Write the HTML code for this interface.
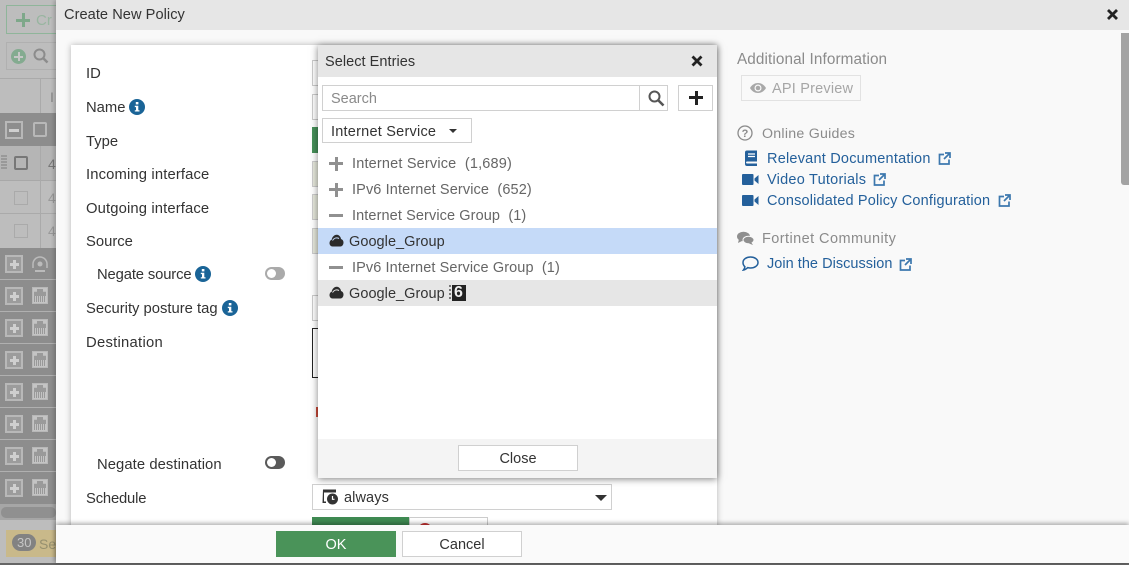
<!DOCTYPE html>
<html><head><meta charset="utf-8">
<style>
html,body{margin:0;padding:0;width:1129px;height:565px;overflow:hidden;background:#bcbcbc;font-family:"Liberation Sans",sans-serif;font-size:14px;color:#333}
div,span,svg{position:absolute;box-sizing:border-box}
.t{white-space:nowrap;line-height:18px;height:18px}
.g{left:0;width:56px;height:32px;background:#8d8d8d;border-bottom:1px solid #b0b0b0}
.pb{left:5px;width:18px;height:18px;border:2px solid #b8b8b8;background:#9c9c9c}
.pb:before{content:"";position:absolute;left:2.500px;top:5.500px;width:9px;height:3px;background:#cfcfcf}
.pb:after{content:"";position:absolute;left:5.500px;top:2.500px;width:3px;height:9px;background:#cfcfcf}
.sw{left:32px;width:16px;height:17px;background:#c4c4c4;border:1px solid #b8b8b8}
.sw:before{content:"";position:absolute;left:1px;top:1px;width:12px;height:7px;background:#9a9a9a;clip-path:polygon(0 100%,0 40%,25% 40%,25% 0,75% 0,75% 40%,100% 40%,100% 100%)}
.sw:after{content:"";position:absolute;left:1px;top:8px;width:12px;height:6px;background:repeating-linear-gradient(90deg,#999 0,#999 1px,#c4c4c4 1px,#c4c4c4 2px)}
.f{left:312px;width:10px;height:26px;background:#fff;border:1px solid #ccc}
.b{background:#fff;border:1px solid #d0d0d0}
.lbl{color:#333;left:86px;font-size:14.800px}
.link{color:#24609b}
.gray{color:#8b8b8b}
.tg{width:20px;height:13px;border-radius:7px;left:265px}
.tg:before{content:"";position:absolute;left:2px;top:2px;width:9px;height:9px;border-radius:50%;background:#fff}
</style></head><body>

<!-- backdrop left -->
<div style="left:0;top:0;width:56px;height:565px;background:#bdbdbd"></div>
<div style="left:6px;top:5px;width:60px;height:29px;border:1px solid #8fb59a"></div>
<div style="left:16px;top:19px;width:14px;height:3px;background:#7ea88a"></div>
<div style="left:21.500px;top:13px;width:3px;height:14px;background:#7ea88a"></div>
<div class="t" style="left:36px;top:12px;color:#98b5a0;font-size:15px">Cr</div>
<div style="left:6px;top:42px;width:60px;height:28px;border:1px solid #b0b0b0"></div>
<div style="left:11px;top:49px;width:15px;height:15px;border-radius:50%;background:#84ab90"></div>
<div style="left:14px;top:55.500px;width:9px;height:2px;background:#c6c6c6"></div>
<div style="left:17.500px;top:52px;width:2px;height:9px;background:#c6c6c6"></div>
<svg style="left:32px;top:47px" width="18" height="18" viewBox="0 0 18 18"><circle cx="7.500" cy="7.500" r="5" fill="none" stroke="#8c8c8c" stroke-width="2"/><path d="M11 11l4.500 4.500" stroke="#8c8c8c" stroke-width="2.500"/></svg>
<div style="left:0;top:78px;width:56px;height:1px;background:#aaa"></div>
<div style="left:40px;top:79px;width:1px;height:34px;background:#aaa"></div>
<div class="t" style="left:50px;top:88px;color:#888">I</div>
<div style="left:0;top:113px;width:56px;height:33px;background:#8d8d8d"></div>
<div style="left:5px;top:121px;width:18px;height:18px;border:2px solid #b8b8b8"></div>
<div style="left:9px;top:128.500px;width:10px;height:3px;background:#cfcfcf"></div>
<div style="left:33px;top:122px;width:14px;height:15px;border:2px solid #b8b8b8;border-radius:2px"></div>
<div style="left:0;top:146px;width:56px;height:35px;background:#b5b5b5;border-bottom:1px solid #a8a8a8"></div>
<div style="left:1px;top:155px;width:6px;height:15px;background:repeating-linear-gradient(#999 0,#999 2px,transparent 2px,transparent 3px)"></div>
<div style="left:14px;top:156px;width:14px;height:14px;border:2px solid #777;border-radius:2px"></div>
<div style="left:40px;top:146px;width:1px;height:102px;background:#aaa"></div>
<div class="t" style="left:48px;top:155px;color:#777">4</div>
<div style="left:0;top:181px;width:56px;height:33px;border-bottom:1px solid #aaa"></div>
<div style="left:14px;top:191px;width:14px;height:14px;border:1px solid #aaa"></div>
<div class="t" style="left:48px;top:189px;color:#999">4</div>
<div style="left:14px;top:224px;width:14px;height:14px;border:1px solid #aaa"></div>
<div class="t" style="left:48px;top:222px;color:#999">4</div>
<div class="g" style="top:248px"></div><div class="pb" style="top:255px"></div>
<svg style="left:31px;top:255px" width="18" height="18" viewBox="0 0 18 18"><path d="M2 13V9a7 7 0 0 1 14 0v4" fill="none" stroke="#bbb" stroke-width="1.500"/><circle cx="9" cy="9" r="2.500" fill="#bbb"/><path d="M4 16h10" stroke="#bbb" stroke-width="2"/></svg>
<div class="g" style="top:280px"></div><div class="pb" style="top:287px"></div><div class="sw" style="top:287px"></div>
<div class="g" style="top:312px"></div><div class="pb" style="top:319px"></div><div class="sw" style="top:319px"></div>
<div class="g" style="top:344px"></div><div class="pb" style="top:351px"></div><div class="sw" style="top:351px"></div>
<div class="g" style="top:376px"></div><div class="pb" style="top:383px"></div><div class="sw" style="top:383px"></div>
<div class="g" style="top:408px"></div><div class="pb" style="top:415px"></div><div class="sw" style="top:415px"></div>
<div class="g" style="top:440px"></div><div class="pb" style="top:447px"></div><div class="sw" style="top:447px"></div>
<div class="g" style="top:472px;height:32px;border:0"></div><div class="pb" style="top:479px"></div><div class="sw" style="top:479px"></div>
<div style="left:0;top:504px;width:56px;height:16px;background:#a6a6a6"></div>
<div style="left:1px;top:507px;width:55px;height:11px;background:#909090;border-radius:5px"></div>
<div style="left:6px;top:530px;width:50px;height:27px;background:#c9b98a"></div>
<div style="left:12px;top:534px;width:24px;height:17px;border-radius:9px;background:#828282"></div>
<div class="t" style="left:17px;top:534px;color:#c6c6c6;font-size:13px">30</div>
<div class="t" style="left:39px;top:535px;color:#96906f">Se</div>
<div style="left:0;top:563px;width:1129px;height:2px;background:#666"></div>

<!-- dialog -->
<div style="left:56px;top:0;width:1073px;height:563px;background:#f9f9f9;box-shadow:-2px 0 4px rgba(0,0,0,.2)"></div>
<div style="left:56px;top:0;width:1073px;height:30px;background:#e6e6e6"></div>
<div class="t" style="left:64px;top:6px;font-size:14.600px;letter-spacing:.05px">Create New Policy</div>
<svg style="left:1106px;top:8px" width="13" height="13" viewBox="0 0 13 13"><path d="M2 2l9 9M11 2l-9 9" stroke="#222" stroke-width="2.800"/></svg>
<div style="left:1121px;top:33px;width:8px;height:152px;background:#a3a3a3;border-radius:0 0 0 3px"></div>

<!-- form panel -->
<div style="left:71px;top:45px;width:646px;height:490px;background:#fff;box-shadow:0 0 6px rgba(0,0,0,.28)"></div>
<div class="t lbl" style="top:65px">ID</div>
<div class="t lbl" style="top:99px">Name</div>
<svg style="left:129px;top:99px" width="16" height="16" viewBox="0 0 16 16"><circle cx="8" cy="8" r="8" fill="#1a6497"/><rect x="6.800" y="3" width="2.600" height="2.400" fill="#fff"/><path d="M5.800 6.800h3.500v4.400h1.200v1.300h-4.700v-1.300h1.200v-3.100h-1.200z" fill="#fff"/></svg>
<div class="t lbl" style="top:133px">Type</div>
<div class="t lbl" style="top:166px;letter-spacing:.14px">Incoming interface</div>
<div class="t lbl" style="top:200px;letter-spacing:.13px">Outgoing interface</div>
<div class="t lbl" style="top:233px">Source</div>
<div class="t lbl" style="left:97px;top:266px;letter-spacing:-.14px">Negate source</div>
<svg style="left:195px;top:266px" width="16" height="16" viewBox="0 0 16 16"><circle cx="8" cy="8" r="8" fill="#1a6497"/><rect x="6.800" y="3" width="2.600" height="2.400" fill="#fff"/><path d="M5.800 6.800h3.500v4.400h1.200v1.300h-4.700v-1.300h1.200v-3.100h-1.200z" fill="#fff"/></svg>
<div class="tg" style="top:267px;background:#aaa"></div>
<div class="t lbl" style="top:300px">Security posture tag</div>
<svg style="left:222px;top:300px" width="16" height="16" viewBox="0 0 16 16"><circle cx="8" cy="8" r="8" fill="#1a6497"/><rect x="6.800" y="3" width="2.600" height="2.400" fill="#fff"/><path d="M5.800 6.800h3.500v4.400h1.200v1.300h-4.700v-1.300h1.200v-3.100h-1.200z" fill="#fff"/></svg>
<div class="t lbl" style="top:334px;letter-spacing:.27px">Destination</div>
<div class="t lbl" style="left:97px;top:456px;letter-spacing:.07px">Negate destination</div>
<div class="tg" style="top:456px;background:#5a5a5a"></div>
<div class="t lbl" style="top:490px;letter-spacing:-.18px">Schedule</div>

<!-- fields behind popup -->
<div class="f" style="top:60px"></div>
<div class="f" style="top:94px"></div>
<div style="left:312px;top:127px;width:10px;height:26px;background:#46915a"></div>
<div class="f" style="top:161px;background:#e6e8dc"></div>
<div class="f" style="top:194px;background:#e6e8dc"></div>
<div class="f" style="top:228px;background:#e6e8dc"></div>
<div class="f" style="top:295px"></div>
<div class="f" style="top:328px;height:50px;border:1px solid #222"></div>
<div style="left:316px;top:407px;width:3px;height:10px;background:#cc4a3a"></div>

<!-- schedule -->
<div class="b" style="left:312px;top:484px;width:300px;height:26px"></div>
<svg style="left:321px;top:488px" width="18" height="18" viewBox="0 0 18 18"><path d="M2 1.500h13v3h-12v9h2v1.500h-3.500z" fill="#333"/><circle cx="11.500" cy="11" r="5.500" fill="#333"/><path d="M11.500 8v3.300h2" fill="none" stroke="#fff" stroke-width="1.200"/></svg>
<div class="t" style="left:344px;top:489px;font-size:14.500px;letter-spacing:.1px">always</div>
<div style="left:595px;top:495px;border-left:6px solid transparent;border-right:6px solid transparent;border-top:6px solid #333"></div>
<div style="left:312px;top:517px;width:97px;height:12px;background:#3f8a52"></div>
<div style="left:409px;top:517px;width:79px;height:12px;background:#fff;border:1px solid #ccc"></div>
<div style="left:418px;top:523px;width:14px;height:14px;border-radius:50%;border:2px solid #c33"></div>

<!-- right column -->
<div class="t gray" style="left:737px;top:51px;font-size:15.300px;letter-spacing:.1px">Additional Information</div>
<div style="left:741px;top:75px;width:120px;height:26px;border:1px solid #e2e2e2"></div>
<svg style="left:750px;top:81px" width="16" height="14" viewBox="0 0 16 14"><path d="M0 7c2-3.500 5-5 8-5s6 1.500 8 5c-2 3.500-5 5-8 5s-6-1.500-8-5z" fill="#a8a8a8"/><circle cx="8" cy="7" r="3.500" fill="#f9f9f9"/><circle cx="8" cy="7" r="2.300" fill="#a8a8a8"/></svg>
<div class="t" style="left:772px;top:80px;color:#a6a6a6;font-size:14.500px;letter-spacing:.2px">API Preview</div>
<svg style="left:737px;top:125px" width="16" height="16" viewBox="0 0 16 16"><circle cx="8" cy="8" r="7" fill="none" stroke="#8b8b8b" stroke-width="1.300"/><text x="8" y="12" font-family="Liberation Sans" font-size="11" font-weight="bold" text-anchor="middle" fill="#8b8b8b">?</text></svg>
<div class="t gray" style="left:762px;top:125px;font-size:14.200px;letter-spacing:.25px">Online Guides</div>
<svg style="left:743px;top:150px" width="16" height="16" viewBox="0 0 16 16"><path d="M2 2.500a2 2 0 0 1 2-2h10v11H4a1 1 0 0 0 0 2h10V16H4a2 2 0 0 1-2-2z" fill="#24609b"/><path d="M5 4h7M5 6.500h7" stroke="#fff" stroke-width="1.200"/></svg>
<div class="t link" style="left:767px;top:150px;font-size:14.500px;letter-spacing:.22px">Relevant Documentation</div>
<svg style="left:938px;top:152px" width="13" height="13" viewBox="0 0 13 13"><path d="M6 2.500H1.500V12H11V7.500M7 1h5v5M12 1L6 7" fill="none" stroke="#3d78ae" stroke-width="1.700"/></svg>
<svg style="left:742px;top:174px" width="17" height="11" viewBox="0 0 17 11"><rect width="11.500" height="11" rx="1" fill="#24609b"/><path d="M12.500 4.500L16.500 1v9l-4-3.500z" fill="#24609b"/></svg>
<div class="t link" style="left:767px;top:171px;font-size:14.500px;letter-spacing:.24px">Video Tutorials</div>
<svg style="left:873px;top:173px" width="13" height="13" viewBox="0 0 13 13"><path d="M6 2.500H1.500V12H11V7.500M7 1h5v5M12 1L6 7" fill="none" stroke="#3d78ae" stroke-width="1.700"/></svg>
<svg style="left:742px;top:195px" width="17" height="11" viewBox="0 0 17 11"><rect width="11.500" height="11" rx="1" fill="#24609b"/><path d="M12.500 4.500L16.500 1v9l-4-3.500z" fill="#24609b"/></svg>
<div class="t link" style="left:767px;top:192px;font-size:14.500px;letter-spacing:.17px">Consolidated Policy Configuration</div>
<svg style="left:998px;top:194px" width="13" height="13" viewBox="0 0 13 13"><path d="M6 2.500H1.500V12H11V7.500M7 1h5v5M12 1L6 7" fill="none" stroke="#3d78ae" stroke-width="1.700"/></svg>
<svg style="left:737px;top:231px" width="17" height="15" viewBox="0 0 17 15"><ellipse cx="6.500" cy="5.500" rx="6.500" ry="4.800" fill="#8f8f8f"/><path d="M2 8L1 12l4-2z" fill="#8f8f8f"/><ellipse cx="11.500" cy="9" rx="5.500" ry="3.800" fill="#8f8f8f" stroke="#f9f9f9"/><path d="M14 11l2 3-4-1.500z" fill="#8f8f8f"/></svg>
<div class="t gray" style="left:762px;top:230px;font-size:14.500px;letter-spacing:.43px">Fortinet Community</div>
<svg style="left:742px;top:256px" width="17" height="15" viewBox="0 0 17 15"><path d="M8.500 1c4 0 7.500 2.200 7.500 5.500S12.500 12 8.500 12c-1 0-2-.1-2.800-.4C4.500 12.800 3 13.800 1.500 14c.8-1 1.300-2 1.400-3.300C1.700 9.700 1 8.200 1 6.500 1 3.200 4.500 1 8.500 1z" fill="none" stroke="#24609b" stroke-width="1.500"/></svg>
<div class="t link" style="left:767px;top:255px;font-size:14.500px;letter-spacing:.03px">Join the Discussion</div>
<svg style="left:899px;top:258px" width="13" height="13" viewBox="0 0 13 13"><path d="M6 2.500H1.500V12H11V7.500M7 1h5v5M12 1L6 7" fill="none" stroke="#3d78ae" stroke-width="1.700"/></svg>

<!-- popup -->
<div style="left:318px;top:45px;width:399px;height:433px;background:#fff;box-shadow:0 1px 7px rgba(0,0,0,.5)"></div>
<div style="left:318px;top:45px;width:399px;height:32px;background:#e6e6e6"></div>
<div class="t" style="left:325px;top:53px;font-size:14.500px;letter-spacing:.05px">Select Entries</div>
<svg style="left:691px;top:55px" width="12" height="12" viewBox="0 0 12 12"><path d="M1.500 1.500l9 9M10.500 1.500l-9 9" stroke="#222" stroke-width="2.800"/></svg>
<div class="b" style="left:322px;top:85px;width:318px;height:26px"></div>
<div class="t" style="left:331px;top:90px;color:#8a8a8a;font-size:14.500px">Search</div>
<div class="b" style="left:639px;top:85px;width:29px;height:26px"></div>
<svg style="left:648px;top:90px" width="17" height="17" viewBox="0 0 17 17"><circle cx="6.500" cy="6.500" r="5" fill="none" stroke="#555" stroke-width="2"/><path d="M10.500 10.500l5 5" stroke="#555" stroke-width="2.600"/></svg>
<div class="b" style="left:678px;top:85px;width:35px;height:26px"></div>
<div style="left:689px;top:96px;width:14px;height:3px;background:#222"></div>
<div style="left:694.500px;top:91px;width:3px;height:14px;background:#222"></div>
<div class="b" style="left:322px;top:118px;width:150px;height:25px"></div>
<div class="t" style="left:331px;top:123px;font-size:14.500px;letter-spacing:.23px">Internet Service</div>
<div style="left:449px;top:129px;border-left:4px solid transparent;border-right:4px solid transparent;border-top:4px solid #333"></div>

<div style="left:329px;top:162px;width:14px;height:3px;background:#909090"></div>
<div style="left:334.500px;top:157px;width:3px;height:14px;background:#909090"></div>
<div class="t" style="left:352px;top:155px;color:#666;font-size:14.500px;letter-spacing:.18px">Internet Service&nbsp; (1,689)</div>
<div style="left:329px;top:188px;width:14px;height:3px;background:#909090"></div>
<div style="left:334.500px;top:183px;width:3px;height:14px;background:#909090"></div>
<div class="t" style="left:352px;top:181px;color:#666;font-size:14.500px;letter-spacing:.12px">IPv6 Internet Service&nbsp; (652)</div>
<div style="left:329px;top:214px;width:14px;height:3px;background:#909090"></div>
<div class="t" style="left:352px;top:207px;color:#666;font-size:14.500px;letter-spacing:.1px">Internet Service Group&nbsp; (1)</div>
<div style="left:318px;top:228px;width:399px;height:26px;background:#c5daf8"></div>
<svg style="left:329px;top:234px" width="15" height="14" viewBox="0 0 15 14"><path d="M.500 9c0-1.800 1-3 2.200-3.300C3.200 2.800 5.500 .5 8 .8c2 .2 3.800 2 4 4.200 1.500.5 2.500 1.800 2.500 3.500 0 2-1.200 4-3 4h-8C1.800 12.500.500 11 .500 9z" fill="#2b2b2b"/><path d="M3.500 6.500C5 4 7.500 3.300 10 4.500" fill="none" stroke="#c5daf8" stroke-width="1"/></svg>
<div class="t" style="left:349px;top:233px;color:#333;font-size:14.500px;letter-spacing:.05px">Google_Group</div>
<div style="left:329px;top:266px;width:14px;height:3px;background:#909090"></div>
<div class="t" style="left:352px;top:259px;color:#666;font-size:14.500px;letter-spacing:.1px">IPv6 Internet Service Group&nbsp; (1)</div>
<div style="left:318px;top:280px;width:399px;height:26px;background:#e6e6e6"></div>
<svg style="left:329px;top:286px" width="15" height="14" viewBox="0 0 15 14"><path d="M.500 9c0-1.800 1-3 2.200-3.300C3.200 2.800 5.500 .5 8 .8c2 .2 3.800 2 4 4.200 1.500.5 2.500 1.800 2.500 3.500 0 2-1.200 4-3 4h-8C1.800 12.500.500 11 .500 9z" fill="#2b2b2b"/><path d="M3.500 6.500C5 4 7.500 3.300 10 4.500" fill="none" stroke="#e6e6e6" stroke-width="1"/></svg>
<div class="t" style="left:349px;top:285px;color:#333;font-size:14.500px;letter-spacing:.05px">Google_Group</div>
<div style="left:449px;top:285px;width:2px;height:16px;background:repeating-linear-gradient(#777 0,#777 2px,transparent 2px,transparent 4px)"></div>
<div style="left:452px;top:285px;width:14px;height:16px;background:#222"></div>
<div class="t" style="left:454px;top:284px;color:#eee;font-size:16px;font-weight:bold">6</div>

<div style="left:318px;top:439px;width:399px;height:39px;background:#f4f4f4"></div>
<div class="b" style="left:458px;top:445px;width:120px;height:26px"></div>
<div class="t" style="left:458px;width:120px;top:450px;text-align:center;font-size:14.500px">Close</div>

<!-- footer -->
<div style="left:56px;top:525px;width:1073px;height:38px;background:#fafafa;box-shadow:0 -2px 4px rgba(0,0,0,.3)"></div>
<div style="left:276px;top:531px;width:120px;height:26px;background:#4a9359"></div>
<div class="t" style="left:276px;width:120px;top:536px;text-align:center;color:#fff;font-size:14.500px">OK</div>
<div class="b" style="left:402px;top:531px;width:120px;height:26px"></div>
<div class="t" style="left:402px;width:120px;top:536px;text-align:center;font-size:14.500px">Cancel</div>
</body></html>
